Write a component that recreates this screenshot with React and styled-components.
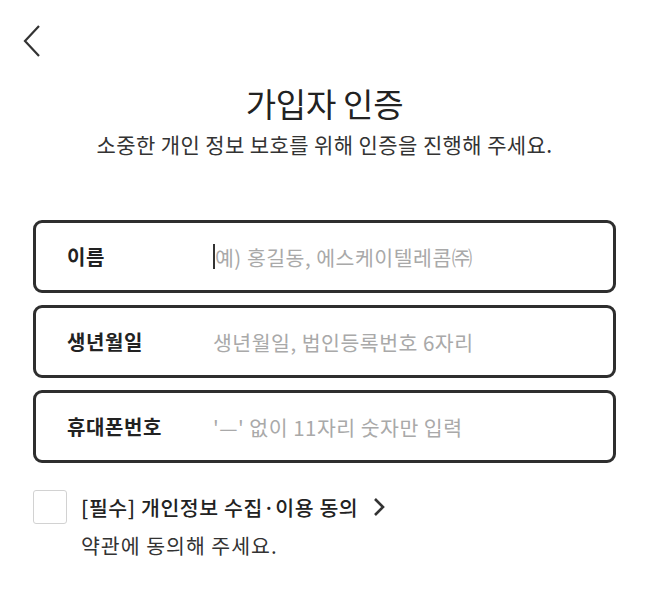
import React from "react";
import styled, { createGlobalStyle } from "styled-components";

const Global = createGlobalStyle`
  html, body { margin: 0; padding: 0; background: #fff; }
  body { font-family: "Noto Sans CJK KR", "Noto Sans", sans-serif; color: #222; }
  * { box-sizing: border-box; }
`;

const Page = styled.div`
  width: 648px;
  height: 614px;
  padding: 0 32px 0 33px;
  display: flex;
  flex-direction: column;
`;

const TopBar = styled.div`
  height: 82px;
  display: flex;
  align-items: flex-start;
  padding-top: 24px;
  margin-left: -11px;
`;

const BackButton = styled.button`
  width: 24px;
  height: 34px;
  border: none;
  background: none;
  padding: 0;
  display: flex;
  cursor: pointer;
`;

const Header = styled.div`
  display: flex;
  flex-direction: column;
  align-items: center;
`;

const Title = styled.h1`
  margin: 0;
  font-size: 33px;
  font-weight: 400;
  line-height: 42px;
  color: #222;
  letter-spacing: -0.3px;
`;

const Subtitle = styled.p`
  margin: 6px 0 0;
  font-size: 21px;
  font-weight: 400;
  line-height: 28px;
  color: #333;
  letter-spacing: 0.4px;
`;

const Form = styled.div`
  margin-top: 62px;
  display: flex;
  flex-direction: column;
  gap: 12px;
`;

const Field = styled.label`
  height: 73px;
  border: 3px solid #2e2e2e;
  border-radius: 9px;
  display: flex;
  align-items: center;
  padding-left: 31px;
`;

const FieldLabel = styled.span`
  width: 146px;
  flex-shrink: 0;
  font-size: 20px;
  font-weight: 700;
  color: #222;
  letter-spacing: 0.6px;
`;

const Placeholder = styled.span`
  display: flex;
  align-items: center;
  font-size: 20.5px;
  font-weight: 400;
  color: #a9a9a9;
  letter-spacing: 0.5px;
`;

const Caret = styled.span`
  display: inline-block;
  width: 2px;
  height: 25px;
  background: #333;
`;

const Agree = styled.div`
  margin-top: 27px;
  display: flex;
  align-items: flex-start;
  gap: 14px;
`;

const CheckBox = styled.span`
  width: 34px;
  height: 34px;
  border: 1.5px solid #d2d2d2;
  border-radius: 3px;
  flex-shrink: 0;
`;

const AgreeText = styled.div`
  display: flex;
  flex-direction: column;
`;

const AgreeTitle = styled.div`
  display: flex;
  align-items: center;
  gap: 14px;
  height: 34px;
  font-size: 20.5px;
  font-weight: 500;
  color: #222;
  letter-spacing: 0.6px;
`;

const AgreeNote = styled.div`
  margin-top: 6px;
  font-size: 20.5px;
  font-weight: 400;
  color: #333;
  letter-spacing: 1px;
`;

const fields = [
  { label: "이름", placeholder: "예) 홍길동, 에스케이텔레콤㈜", focused: true },
  { label: "생년월일", placeholder: "생년월일, 법인등록번호 6자리" },
  { label: "휴대폰번호", placeholder: "'—' 없이 11자리 숫자만 입력" },
];

export default function App() {
  return (
    <>
      <Global />
      <Page>
        <TopBar>
          <BackButton aria-label="뒤로">
            <svg width="24" height="34" viewBox="0 0 24 34">
              <polyline points="17,2 3,17 17,32" fill="none" stroke="#333" strokeWidth="2.2" />
            </svg>
          </BackButton>
        </TopBar>
        <Header>
          <Title>가입자 인증</Title>
          <Subtitle>소중한 개인 정보 보호를 위해 인증을 진행해 주세요.</Subtitle>
        </Header>
        <Form>
          {fields.map((f) => (
            <Field key={f.label}>
              <FieldLabel>{f.label}</FieldLabel>
              <Placeholder>
                {f.focused && <Caret />}
                {f.placeholder}
              </Placeholder>
            </Field>
          ))}
        </Form>
        <Agree>
          <CheckBox />
          <AgreeText>
            <AgreeTitle>
              [필수] 개인정보 수집·이용 동의
              <svg width="14" height="20" viewBox="0 0 14 20">
                <polyline points="3,2 11,10 3,18" fill="none" stroke="#333" strokeWidth="2.6" />
              </svg>
            </AgreeTitle>
            <AgreeNote>약관에 동의해 주세요.</AgreeNote>
          </AgreeText>
        </Agree>
      </Page>
    </>
  );
}
